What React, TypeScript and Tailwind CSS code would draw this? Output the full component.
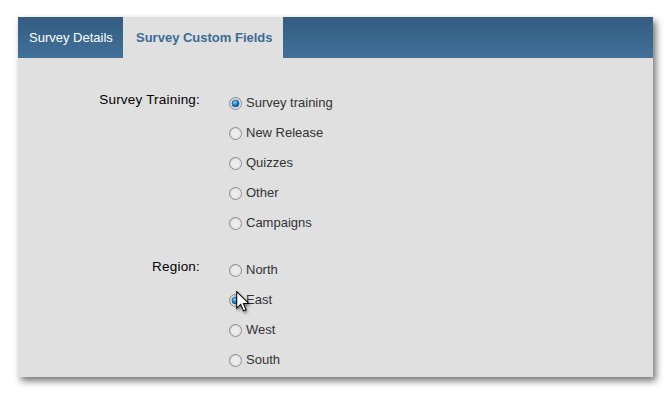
import React from "react";

function Radio({ checked }: { checked?: boolean }) {
  return (
    <svg width="13" height="13" viewBox="0 0 13 13" className="shrink-0">
      <defs>
        <linearGradient id="rg" x1="0" y1="0" x2="1" y2="1">
          <stop offset="0" stopColor="#c8c8c8" />
          <stop offset="1" stopColor="#ffffff" />
        </linearGradient>
        <radialGradient id="dot" cx="0.4" cy="0.35" r="0.7">
          <stop offset="0" stopColor="#8ad8ff" />
          <stop offset="0.5" stopColor="#1b84cc" />
          <stop offset="1" stopColor="#0b4a80" />
        </radialGradient>
      </defs>
      <circle cx="6.5" cy="6.5" r="6" fill="url(#rg)" stroke="#8a8a8a" strokeWidth="1" />
      {checked ? (
        <>
          <circle cx="6.5" cy="6.5" r="4.8" fill="#f2f2f2" stroke="#c0c0c0" strokeWidth="0.6" />
          <circle cx="6.5" cy="6.5" r="3.6" fill="url(#dot)" stroke="#0d4a7c" strokeWidth="0.5" />
        </>
      ) : (
        <circle cx="6.5" cy="6.5" r="4.8" fill="#ececec" stroke="#d0d0d0" strokeWidth="0.6" />
      )}
    </svg>
  );
}

function Option({ label, checked, cursor }: { label: string; checked?: boolean; cursor?: boolean }) {
  return (
    <div className="relative flex h-[30px] items-center">
      <Radio checked={checked} />
      <span className="ml-[4px] text-[13px] text-[#333333]" style={{ fontFamily: '"Liberation Sans", Arial, sans-serif' }}>
        {label}
      </span>
      {cursor && (
        <svg
          width="15"
          height="23"
          viewBox="0 0 14 22"
          className="absolute left-[7px] top-[6px]"
          style={{ filter: "drop-shadow(1px 2px 1.5px rgba(0,0,0,0.45))" }}
        >
          <path
            d="M0.5 0.5 L0.5 16.5 L4.3 12.8 L7 19 L9.5 18 L6.9 11.9 L12 11.9 Z"
            fill="#ffffff"
            stroke="#000000"
            strokeWidth="1"
            strokeLinejoin="miter"
          />
        </svg>
      )}
    </div>
  );
}

function Group({ label, options }: { label: string; options: { l: string; c?: boolean; cur?: boolean }[] }) {
  return (
    <div className="flex">
      <div
        className="w-[182px] pt-[4px] text-right text-[13.5px] leading-[16px] tracking-[0.2px] text-black"
        style={{ fontFamily: '"Liberation Sans", Tahoma, sans-serif' }}
      >
        {label}
      </div>
      <div className="ml-[29px] flex flex-col">
        {options.map((o) => (
          <Option key={o.l} label={o.l} checked={o.c} cursor={o.cur} />
        ))}
      </div>
    </div>
  );
}

export default function App() {
  return (
    <div className="h-[394px] w-[672px] bg-white pl-[18px] pt-[17px]" style={{ fontFamily: '"Liberation Sans", Arial, sans-serif' }}>
      <div className="flex h-[360px] w-[635px] flex-col bg-[#e0e0e0] shadow-[3px_4px_7px_rgba(0,0,0,0.55)]">
        <div className="flex h-[41px] bg-gradient-to-b from-[#335c80] to-[#42709a]">
          <div className="flex w-[105px] items-center pl-[11px] text-[13px] text-white">Survey Details</div>
          <div className="flex w-[160px] items-center bg-[#e0e0e0] pl-[13px] text-[13px] font-bold text-[#3b6b95]">
            Survey Custom Fields
          </div>
        </div>
        <div className="flex flex-col gap-[17px] pt-[30px]">
          <Group
            label="Survey Training:"
            options={[{ l: "Survey training", c: true }, { l: "New Release" }, { l: "Quizzes" }, { l: "Other" }, { l: "Campaigns" }]}
          />
          <Group label="Region:" options={[{ l: "North" }, { l: "East", c: true, cur: true }, { l: "West" }, { l: "South" }]} />
        </div>
      </div>
    </div>
  );
}
